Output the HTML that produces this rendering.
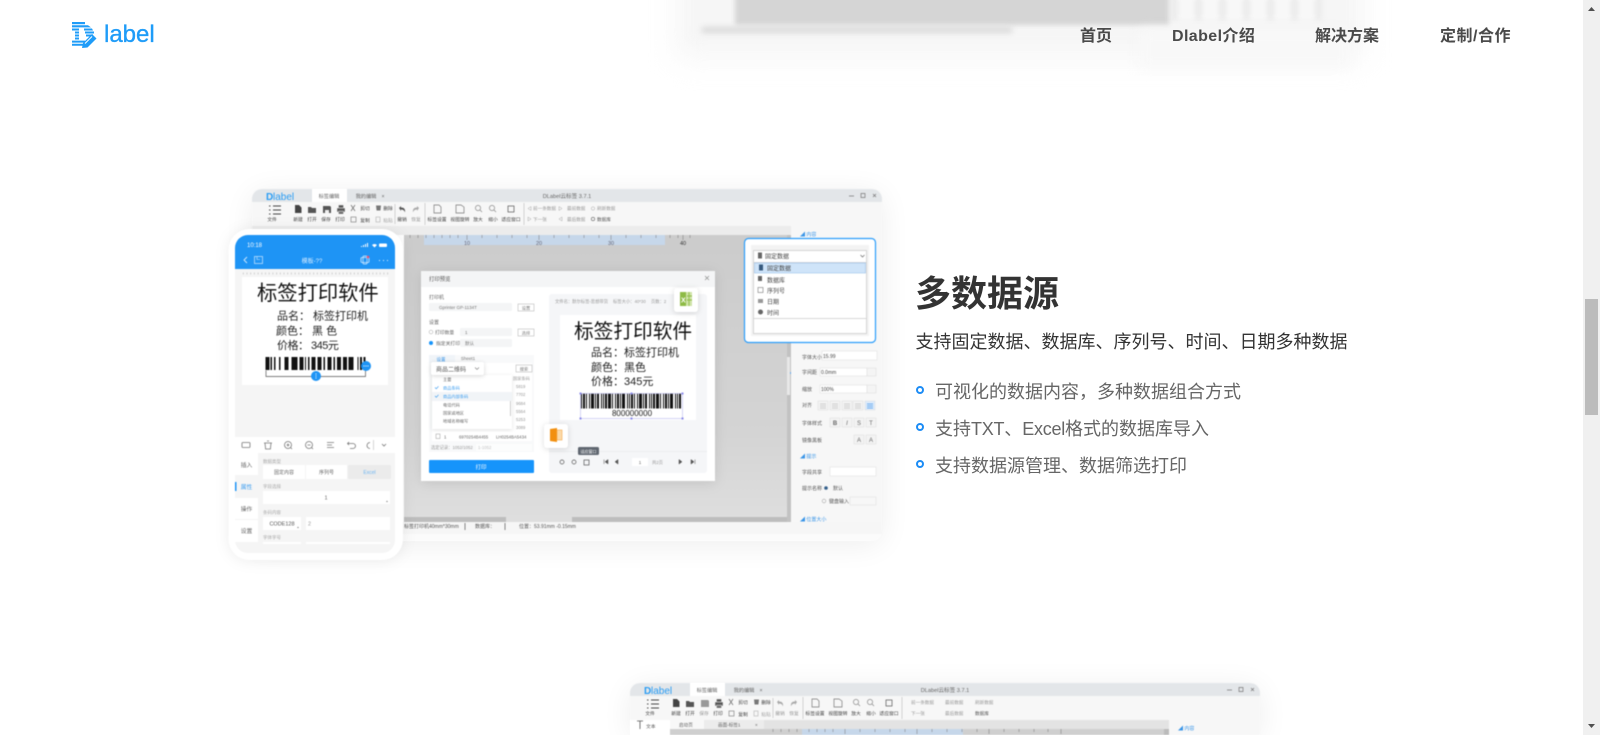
<!DOCTYPE html>
<html lang="zh"><head><meta charset="utf-8"><title>Dlabel</title>
<style>
html,body{margin:0;padding:0;width:1600px;height:735px;overflow:hidden;background:#fff}
body{position:relative;font-family:"Liberation Sans","Noto Sans CJK SC",sans-serif}
.a{position:absolute}
.nav{position:absolute;top:26px;font-size:16px;line-height:22px;font-weight:700;color:#4a4a4a;white-space:nowrap}
svg text{font-family:"Liberation Sans","Noto Sans CJK SC",sans-serif}
h1{position:absolute;left:915px;top:267px;margin:0;font-size:36px;line-height:54px;font-weight:700;color:#333}
.sub{position:absolute;left:915.500px;top:329px;font-size:18px;line-height:26px;color:#333;white-space:nowrap}
.li{position:absolute;left:935px;font-size:18px;line-height:26px;color:#666;white-space:nowrap}
.li span{letter-spacing:-.25px}
.dot{position:absolute;left:916px;width:4px;height:4px;border:2px solid #1c8cf5;border-radius:50%}
</style></head><body>

<!-- blurred bottom of previous image -->
<div class="a" style="left:0;top:0;width:1583px;height:110px;overflow:hidden">
<div class="a" style="left:675px;top:-40px;width:690px;height:100px;background:#f4f4f4;filter:blur(14px);opacity:.75"></div>
<div class="a" style="left:690px;top:-10px;width:660px;height:50px;background:#f6f6f6;filter:blur(3px)"></div>
<div class="a" style="left:735px;top:-10px;width:434px;height:35px;background:#d5d5d5;filter:blur(2.500px)"></div>
<div class="a" style="left:702px;top:27px;width:310px;height:6px;background:#d9d9d9;filter:blur(3px)"></div>
<div class="a" style="left:1172px;top:-4px;width:150px;height:24px;background:repeating-linear-gradient(90deg,#e6e6e6 0 5px,#f8f8f8 5px 24px);filter:blur(3px)"></div>
<div class="a" style="left:1140px;top:30px;width:210px;height:38px;background:#f8f8f8;filter:blur(6px)"></div>
</div>

<!-- logo -->
<svg class="a" style="left:72px;top:22px" width="26" height="26" viewBox="0 0 26 26">
<g fill="#1f9cf8"><rect x="0" y="0" width="13" height="2.200"/><path d="M0 3.200h16l3 2.200H0z"/><path d="M0 6.500h3v2H0zM4 6.500h3v2H4zM12 6.500h8l1 2h-9z"/><path d="M3 9.500h4v2H3zM13 9.500h9v2h-9zM3 12.500h4v2H3zM14 12.500h7v2h-7zM3 15.500h4v2H3zM0 6.500h7v2H0z"/><path d="M0 18.600h13v2H0zM0 21.700h11v2H0z"/><path d="M11 21l9-9 4.500 4.500-9 9L10 26z"/></g><path d="M13 21.500l7-7" stroke="#fff" stroke-width="1"/></svg>
<div class="a" style="left:104px;top:20px;font-size:24px;line-height:30px;color:#1f9cf8;-webkit-text-stroke:.35px #1f9cf8;font-family:'Liberation Sans',sans-serif">label</div>

<div class="nav" style="left:1080px">首页</div>
<div class="nav" style="left:1172px;letter-spacing:.4px">Dlabel介绍</div>
<div class="nav" style="left:1315px">解决方案</div>
<div class="nav" style="left:1440px;letter-spacing:.5px">定制/合作</div>

<!-- window shadows -->
<div class="a" style="left:252px;top:189px;width:630px;height:352px;border-radius:12px;box-shadow:0 4px 30px rgba(0,0,0,.07)"></div>
<div class="a" style="left:630px;top:683px;width:630px;height:52px;border-radius:12px 12px 0 0;box-shadow:0 4px 30px rgba(0,0,0,.07)"></div>

<svg class="a" style="left:0;top:0;filter:blur(.45px)" width="1583" height="735" viewBox="0 0 1583 735">
<defs>
<linearGradient id="cv" x1="0" y1="0" x2="0" y2="1"><stop offset="0" stop-color="#cccccc"/><stop offset=".7" stop-color="#d4d4d4"/><stop offset="1" stop-color="#dedede"/></linearGradient>
</defs>

<!-- ========== WINDOW 1 ========== -->
<g transform="translate(252 189)">
<rect width="630" height="352" rx="10" fill="#fff"/>
<path d="M0 13V10a10 10 0 0 1 10-10h610a10 10 0 0 1 10 10v3z" fill="#e3e6e9"/>
<rect y="13" width="630" height="24" fill="#f7f7f7"/>
<rect y="37" width="630" height="9" fill="#ececec"/>
<text x="14" y="11" font-size="10" font-weight="700" fill="#2a9df4">D</text><text x="21" y="11" font-size="10" fill="#2a9df4">label</text>
<path d="M60 0h35v13H60z" fill="#fff"/>
<g font-size="5.200" fill="#666" text-anchor="middle">
<text x="77" y="9">标签编辑</text><text x="114" y="9">我的编辑</text><text x="131" y="9">×</text><text x="315" y="9" font-size="5.600">DLabel云标签 3.7.1</text>
</g>
<path d="M597 7h5M609 4.500h4v4h-4zM621 5l3 3m0-3l-3 3" stroke="#777" stroke-width=".7" fill="none"/>
<!-- toolbar icons -->
<path d="M17 17h1.500M17 21h1.500M17 25h1.500M21 17h8M21 21h8M21 25h8" stroke="#444" stroke-width="1"/>
<path d="M43 16h4l2.500 2.500V24H43z" fill="#444"/><path d="M56 18h3l1 1h4v5h-8z" fill="#555"/><path d="M71 17h7l1 1v6h-8z" fill="#555"/><rect x="73" y="21" width="4" height="3" fill="#eee"/><path d="M85 19h8v4h-8zM86.500 16h5v3h-5zM86.500 22h5v3h-5z" fill="#555" stroke="#f7f7f7" stroke-width=".4"/>
<path d="M99 16l4 6m0-6l-4 6" stroke="#777" stroke-width=".8"/><rect x="99" y="28" width="5" height="5" fill="none" stroke="#888" stroke-width=".7"/>
<path d="M124 16.500h5l-.6 5h-3.800z" fill="#777"/><rect x="124" y="28" width="4" height="5" fill="none" stroke="#bbb" stroke-width=".7"/>
<path d="M147 19l2-2v1.500c3 0 4.500 1.500 4 5-.5-2-2-3-4-3V22z" fill="#555"/><path d="M167 19l-2-2v1.500c-3 0-4.500 1.500-4 5 .5-2 2-3 4-3V22z" fill="#aaa"/>
<path d="M182 16h5l2 2v6h-7z M204 16h5l3 2v6h-8z" fill="none" stroke="#777" stroke-width=".7"/>
<g fill="none" stroke="#888" stroke-width=".7"><circle cx="226" cy="19" r="2.600"/><path d="M228 21l2 2"/><circle cx="240" cy="19" r="2.600"/><path d="M242 21l2 2"/><rect x="256" y="17" width="6" height="6" stroke="#555"/></g>
<path d="M143 15v20M173 14v22M272 14v22" stroke="#c8c8c8" stroke-width=".8"/>
<g font-size="4.800" fill="#444" text-anchor="middle">
<text x="20" y="32">文件</text><text x="46" y="32">新建</text><text x="60" y="32">打开</text><text x="74" y="32">保存</text><text x="88" y="32">打印</text>
<text x="113" y="21">剪切</text><text x="113" y="33">复制</text><text x="136" y="21">删除</text><text x="136" y="33" fill="#aaa">粘贴</text>
<text x="150" y="32">撤销</text><text x="164" y="32" fill="#999">恢复</text>
<text x="185" y="32">标签设置</text><text x="208" y="32">视图旋转</text><text x="226" y="32">放大</text><text x="241" y="32">缩小</text><text x="259" y="32">适应窗口</text>
</g>
<g font-size="4.600" fill="#999">
<text x="281" y="21">前一条数据</text><text x="315" y="21">最前数据</text><text x="345" y="21">刷新数据</text>
<text x="281" y="32">下一张</text><text x="315" y="32">最后数据</text><text x="345" y="32" fill="#555">数据库</text>
</g>
<path d="M279 17.500l-3 2 3 2zM307 17.500l3 2-3 2zM276 28l3 2-3 2zM310 28l-3 2 3 2z" fill="none" stroke="#aaa" stroke-width=".5"/><circle cx="341" cy="19.500" r="1.700" fill="none" stroke="#aaa" stroke-width=".5"/><circle cx="341" cy="30" r="1.700" fill="none" stroke="#666" stroke-width=".6"/>
<!-- canvas -->
<rect x="152" y="46" width="387" height="282" fill="url(#cv)"/>
<rect x="172" y="46" width="241" height="10" fill="#c6d7ea"/>
<path d="M158 46v3M166 46v3M174 46v3M182 46v3M190 46v3M198 46v3M206 46v3M215 46v5M230 46v3M245 46v3M260 46v3M275 46v3M287 46v5M302 46v3M317 46v3M332 46v3M347 46v3M359 46v5M374 46v3M389 46v3M404 46v3M418 46v3M431 46v5M426 46v3M438 46v3" stroke="#777" stroke-width=".5"/>
<g font-size="5.500" fill="#667" text-anchor="middle"><text x="215" y="56">10</text><text x="287" y="56">20</text><text x="359" y="56">30</text><text x="431" y="56" fill="#333">40</text></g>
<!-- scrollbars -->
<rect x="152" y="328" width="387" height="5" fill="#bdbdbd"/><rect x="254" y="328" width="66" height="5" fill="#dedede"/>
<rect x="535" y="46" width="4" height="287" fill="#c2c2c2"/><rect x="535" y="168" width="3" height="38" fill="#e8e8e8"/><circle cx="539" cy="184" r="1" fill="#4a9bec"/>
<!-- status -->
<path d="M0 333h630v9a10 10 0 0 1-10 10H10a10 10 0 0 1-10-10z" fill="#fbfbfb"/><rect y="333" width="630" height="12" fill="#f6f6f6"/>
<g font-size="5" fill="#555"><text x="152" y="339">标签打印机40mm*30mm</text><text x="223" y="339">数据库：</text><text x="267" y="339">位置：53.91mm -0.15mm</text></g>
<path d="M213 334v7M253 334v7" stroke="#555" stroke-width=".7"/>
<!-- right panel -->
<rect x="539" y="37" width="91" height="296" fill="#f7f7f7"/>
<g font-size="5" fill="#555">
<text x="550" y="170">字体大小</text><text x="550" y="185">字间距</text><text x="550" y="202">缩放</text><text x="550" y="218">对齐</text><text x="550" y="236">字体样式</text><text x="550" y="253">镜像黑板</text><text x="550" y="285">字段共享</text><text x="550" y="301">提示名称</text><text x="581" y="301">默认</text><text x="577" y="314">键盘输入</text>
<text x="548" y="47" fill="#3b96e8">◢ 内容</text><text x="548" y="269" fill="#3b96e8">◢ 提示</text><text x="548" y="332" fill="#3b96e8">◢ 位置大小</text>
</g>
<g fill="#fff" stroke="#ddd" stroke-width=".5">
<rect x="570" y="162" width="55" height="9"/><rect x="568" y="179" width="47" height="8"/><rect x="615" y="179" width="9" height="8" fill="#f4f4f4"/><rect x="568" y="196" width="47" height="8"/><rect x="615" y="196" width="9" height="8" fill="#f4f4f4"/>
<rect x="578" y="278" width="46" height="9"/><rect x="598" y="308" width="26" height="8" fill="#f7f7f7"/>
</g>
<g font-size="5" fill="#444"><text x="571" y="169">15.99</text><text x="569" y="185">0.0mm</text><text x="569" y="202">100%</text></g>
<g fill="#f3f3f3" stroke="#ddd" stroke-width=".5">
<rect x="566" y="212" width="10" height="9"/><rect x="578" y="212" width="10" height="9"/><rect x="590" y="212" width="10" height="9"/><rect x="601" y="212" width="10" height="9"/><rect x="613" y="212" width="10" height="9" fill="#dcebfb"/>
<rect x="578" y="229" width="10" height="9"/><rect x="590" y="229" width="10" height="9"/><rect x="602" y="229" width="10" height="9"/><rect x="614" y="229" width="10" height="9"/>
<rect x="602" y="246" width="10" height="9"/><rect x="614" y="246" width="10" height="9"/>
</g>
<path d="M568 215h6M568 217h6M568 219h6M580 215h6M580 217h6M580 219h6M592 215h6M592 217h6M592 219h6M603 215h6M603 217h6M603 219h6" stroke="#aaa" stroke-width=".5"/><path d="M615 215h6M615 217h6M615 219h6" stroke="#4a9bec" stroke-width=".7"/>
<g font-size="6" fill="#666" text-anchor="middle"><text x="583" y="236" font-weight="700">B</text><text x="595" y="236" font-style="italic">I</text><text x="607" y="236">S</text><text x="619" y="236">T</text><text x="607" y="253">A</text><text x="619" y="253">A</text></g>
<circle cx="574" cy="299" r="1.800" fill="#34608c"/><circle cx="572" cy="312" r="1.800" fill="none" stroke="#aaa" stroke-width=".6"/>
<!-- dialog -->
<rect x="169" y="82" width="294" height="210" fill="#fff" style="filter:drop-shadow(0 2px 6px rgba(0,0,0,.1))"/>
<rect x="169" y="82" width="294" height="16" fill="#f4f5f6"/>
<text x="177" y="92" font-size="5.400" fill="#555">打印预览</text><path d="M453 87l4 4m0-4l-4 4" stroke="#888" stroke-width=".6"/>
<g font-size="4.800" fill="#666"><text x="177" y="110" font-size="5">打印机</text><text x="177" y="135" font-size="5">设置</text><text x="183" y="145">打印数量</text><text x="184" y="156">指定关打印</text></g>
<g fill="#f4f5f6"><rect x="177" y="114" width="83" height="8" rx="1"/><rect x="208" y="139" width="52" height="8" rx="1"/><rect x="208" y="150" width="52" height="8" rx="1"/></g>
<g font-size="4.500" fill="#777"><text x="187" y="120">Gprinter GP-1134T</text><text x="213" y="145">1</text><text x="213" y="156">默认</text></g>
<g fill="#fff" stroke="#bbb" stroke-width=".6"><rect x="266" y="115" width="16" height="7"/><rect x="266" y="140" width="16" height="7"/></g>
<g font-size="4.200" fill="#777" text-anchor="middle"><text x="274" y="120.500">设置</text><text x="274" y="145.500">选择</text></g>
<circle cx="179" cy="143" r="1.900" fill="none" stroke="#aaa" stroke-width=".5"/><circle cx="179" cy="154" r="2" fill="#1694fb"/>
<!-- table -->
<rect x="177" y="166" width="105" height="97" fill="#f8f9fa"/><rect x="177" y="166" width="26" height="8" fill="#f0f4f8"/>
<text x="189" y="172" font-size="4.500" fill="#3b96e8" text-anchor="middle">设置</text><text x="216" y="171" font-size="4.500" fill="#777" text-anchor="middle">Sheet1</text>
<rect x="180" y="174" width="100" height="69" fill="#fff"/>
<rect x="264" y="176" width="16" height="7" fill="#fff" stroke="#bbb" stroke-width=".6"/><text x="272" y="181.500" font-size="4.200" fill="#777" text-anchor="middle">搜索</text>
<g font-size="4.200" fill="#999"><text x="261" y="191">国家条码</text><text x="264" y="199">5819</text><text x="264" y="207">7702</text><text x="264" y="216">9684</text><text x="264" y="224">5564</text><text x="264" y="232">5253</text><text x="264" y="240">3089</text></g>
<rect x="180" y="186" width="80" height="54" fill="#fff" style="filter:drop-shadow(0 1px 2px rgba(0,0,0,.12))"/>
<rect x="180" y="203" width="80" height="9" fill="#f1f4f7"/><rect x="258" y="212" width="1" height="15" fill="#ccc"/>
<g font-size="4.200" fill="#666"><text x="191" y="192">主要</text><text x="191" y="200.500" fill="#3b9df0">商品条码</text><text x="191" y="209" fill="#3b9df0">商品内部条码</text><text x="191" y="217.500">电话代码</text><text x="191" y="225.500">国家或地区</text><text x="191" y="233.500">地域名称缩写</text></g>
<path d="M183 198.500l1.300 1.300 2.200-2.500M183 207l1.300 1.300 2.200-2.500" fill="none" stroke="#3b9df0" stroke-width=".7"/>
<rect x="179" y="173" width="53" height="13" rx="2" fill="#fff" style="filter:drop-shadow(0 1px 2px rgba(0,0,0,.16))"/>
<text x="184" y="182.500" font-size="6" fill="#555">商品二维码</text><path d="M223 178.500l2 2 2-2" fill="none" stroke="#777" stroke-width=".6"/>
<rect x="180" y="243" width="100" height="9" fill="#fff"/>
<g font-size="4.300" fill="#666"><rect x="184" y="245" width="4" height="4.500" fill="none" stroke="#999" stroke-width=".5"/><text x="192" y="249.500">1</text><text x="207" y="249.500">6970254B4455</text><text x="244" y="249.500">LH0254BA5434</text><text x="179" y="260" fill="#999">选定记录：1052/1052</text><text x="226" y="260">1-1052</text></g>
<rect x="224" y="255" width="56" height="7" fill="#fff" opacity=".6"/>
<rect x="177" y="271" width="105" height="13" rx="1" fill="#1694fb"/><text x="229" y="280" font-size="5.500" fill="#fff" text-anchor="middle">打印</text>
<!-- preview -->
<rect x="297" y="105" width="158" height="179" rx="3" fill="#f5f6f8"/>
<g font-size="4.300" fill="#999"><text x="303" y="114">文件名：默尔标签-思想带货</text><text x="361" y="114">标签大小：40*30</text><text x="399" y="114">页数：2</text></g>
<rect x="308" y="126" width="136" height="105" fill="#fff"/>
<text x="322" y="149" font-size="19.700" fill="#111">标签打印软件</text>
<g font-size="11" fill="#222"><text x="339" y="167">品名：标签打印机</text><text x="339" y="182">颜色：黑色</text><text x="339" y="196">价格：345元</text></g>
<path d="M329 212h100" stroke="#111" stroke-width="15" stroke-dasharray="1 1 2 1 1 2 1 1 3 1 1 1 2 2 1 1 1 1 2 1 3 1 1 2 1 1 2 1 1 1 3 2 1 1"/>
<rect x="328.500" y="204.500" width="102" height="25" fill="none" stroke="#b9b9ee" stroke-width=".6"/>
<g fill="#8a8ae8"><rect x="327.500" y="203.500" width="2" height="2"/><rect x="378.500" y="203.500" width="2" height="2"/><rect x="429.500" y="203.500" width="2" height="2"/><rect x="327.500" y="228.500" width="2" height="2"/><rect x="378.500" y="228.500" width="2" height="2"/><rect x="429.500" y="228.500" width="2" height="2"/></g>
<text x="380" y="227" font-size="8" fill="#222" text-anchor="middle">800000000</text>
<rect x="297" y="262" width="158" height="1" fill="#eceef0"/>
<rect x="326" y="258" width="21" height="8" rx="1.500" fill="#5f6670"/><text x="336.500" y="263.800" font-size="4" fill="#fff" text-anchor="middle">适应窗口</text>
<g fill="none" stroke="#555" stroke-width=".7"><circle cx="310" cy="273" r="2"/><circle cx="322" cy="273" r="2"/><rect x="332" y="271" width="5" height="5"/></g>
<path d="M352 270.500v4.500M353 272.800l3-2.300v4.500zM366 270.500l-3 2.300 3 2.300zM427 270.500l3 2.300-3 2.300zM439 270.500l3 2.300-3 2.300zM443 270.500v4.500" fill="#555" stroke="#555" stroke-width=".5"/>
<rect x="380" y="269" width="16" height="8" fill="#fff"/><text x="388" y="275" font-size="4.500" fill="#666" text-anchor="middle">1</text><text x="400" y="275" font-size="4.300" fill="#999">共2页</text>
<!-- tiles -->
<rect x="422" y="99" width="24" height="24" rx="3" fill="#fff" style="filter:drop-shadow(0 1px 3px rgba(0,0,0,.14))"/>
<rect x="428" y="103" width="12" height="14" fill="#cfe3a8"/><rect x="428" y="103" width="6" height="14" fill="#8ebb46"/><path d="M435 107h5M435 111h5M437 103v14" stroke="#8ebb46" stroke-width=".9"/><text x="429" y="113.500" font-size="7" font-weight="700" fill="#fff">X</text>
<rect x="292" y="235" width="24" height="24" rx="3" fill="#fff" style="filter:drop-shadow(0 1px 3px rgba(0,0,0,.14))"/>
<path d="M298 240l7-1v14l-7-1z" fill="#f28f0f"/><rect x="305" y="241" width="5" height="10" fill="#fbd9a8" stroke="#f5a94a" stroke-width=".6"/>
<!-- blue popup -->
<rect x="492.500" y="49.500" width="131" height="104" rx="4" fill="#fff" stroke="#2a9dfb" stroke-width="1.200"/>
<rect x="499" y="56" width="118" height="91" fill="#f3f3f3"/>
<rect x="501.500" y="61.500" width="113" height="83" fill="#fff" stroke="#ccc" stroke-width=".8"/>
<path d="M501.500 73.500h113M501.500 129.500h113" stroke="#ccc" stroke-width=".8"/>
<rect x="502.500" y="74" width="111" height="10" fill="#cfe4f9" stroke="#8db9e6" stroke-width=".5"/>
<path d="M609 66l2 2 2-2" fill="none" stroke="#666" stroke-width=".7" transform="translate(-.5 0)"/>
<g font-size="6" fill="#444"><text x="513" y="69.500">固定数据</text><text x="515" y="81.500">固定数据</text><text x="515" y="93.500">数据库</text><text x="515" y="104">序列号</text><text x="515" y="115">日期</text><text x="515" y="126">时间</text></g>
<g fill="#666"><rect x="506" y="63.500" width="4" height="6"/><rect x="507" y="75.500" width="4" height="6" fill="#36597e"/><rect x="506" y="87" width="4" height="5"/><rect x="506" y="98.500" width="5" height="5" fill="none" stroke="#777" stroke-width=".6"/><rect x="506" y="110" width="5" height="4" fill="#999"/><circle cx="508.500" cy="123" r="2.500"/></g>
</g>

<!-- ========== PHONE ========== -->
<rect x="228.500" y="229" width="174.500" height="331" rx="21" fill="#fff" style="filter:drop-shadow(0 1px 7px rgba(0,0,0,.07))"/>
<rect x="235" y="235" width="160" height="318" rx="13" fill="#f5f5f5"/>
<path d="M235 269v-21a13 13 0 0 1 13-13h134a13 13 0 0 1 13 13v21z" fill="#1e94f5"/>
<text x="247" y="247" font-size="6" fill="#fff">10:18</text>
<path d="M361 246h1v1h-1zM363 245h1v2h-1zM365 244h1v3h-1zM367 243h1v4h-1z" fill="#fff"/><path d="M372 245q2.500-2 5 0l-2.500 2.500z" fill="#fff"/><rect x="379" y="243.500" width="8" height="3.500" rx="1" fill="#fff"/>
<path d="M247 257l-3 3 3 3" fill="none" stroke="#cfe8ff" stroke-width=".9"/><rect x="254.500" y="256.500" width="8" height="7" fill="none" stroke="#cfe8ff" stroke-width=".7"/><path d="M257 256.500v3h3" fill="none" stroke="#cfe8ff" stroke-width=".6"/>
<text x="312" y="263" font-size="6" fill="#d5ebff" text-anchor="middle">模板-??</text>
<rect x="361" y="257.500" width="8" height="5" rx="1" fill="none" stroke="#d5ebff" stroke-width=".8"/><rect x="363" y="256" width="4" height="8" rx="1" fill="none" stroke="#d5ebff" stroke-width=".7"/><circle cx="368" cy="257" r="1.300" fill="#f0506e"/>
<path d="M379 260.500h1M383 260.500h1M387 260.500h1" stroke="#e2f1ff" stroke-width="1"/>
<rect x="235" y="269" width="160" height="8" fill="#f5f5f5"/><path d="M243 273.500H390" stroke="#bbb" stroke-width="2" stroke-dasharray=".6 3.100"/>
<rect x="242" y="277" width="146" height="108" fill="#fff"/>
<text x="257" y="300" font-size="20.300" fill="#111">标签打印软件</text>
<g font-size="11" fill="#222"><text x="277" y="319.500">品名： 标签打印机</text><text x="276" y="334.500">颜色： 黑 色</text><text x="277" y="349" letter-spacing="-.5">价格： 345元</text></g>
<path d="M265.500 363.500h100" stroke="#111" stroke-width="13" stroke-dasharray="4 1 1.500 2 1.500 3.500 1.500 4 4 3 6 2 4 1.500 1 2 1.500 2 4 2 4 2 1.500 2.500 4 2 1.500 2 4 2 4 1.500 5"/>
<path d="M266 370.500v6h99.500v-6" fill="none" stroke="#555" stroke-width=".7"/>
<circle cx="366" cy="366" r="5" fill="#1e94f5"/><path d="M363.500 366h5" stroke="#fff" stroke-width=".9" stroke-dasharray="1 1"/><circle cx="316" cy="376" r="5" fill="#1e94f5"/><path d="M316 373.500v5" stroke="#fff" stroke-width=".9" stroke-dasharray="1 1"/>
<rect x="235" y="437" width="160" height="16" fill="#fff"/>
<g fill="none" stroke="#777" stroke-width=".8"><rect x="242" y="442.500" width="8" height="5" rx=".8"/><path d="M265 443h6l-.6 6h-4.800zM264 443h8M267 441h2"/><circle cx="288" cy="445" r="3.500"/><path d="M286.500 445h3M288 443.500v3M290.500 447.500l1.500 1.500"/><circle cx="309" cy="445" r="3.500"/><path d="M307.500 445h3M311.500 447.500l1.500 1.500"/><path d="M327 442.500h7M327 445h5M327 447.500h7M349 442l-1.500 1.500 1.500 1.500M347.500 443.500h5.500a2.500 2.500 0 0 1 0 5h-3"/><path d="M372 442.500a3 3 0 1 0 0 6M384 444l2 2 2-2" transform="translate(-2 0)"/></g><path d="M373.500 440v10" stroke="#bbb" stroke-width=".6"/>
<!-- tabs -->
<path d="M235 453h23v22h-23zM235 498h23v21h-23zM235 520h23v22h-23z" fill="#fff"/><rect x="235" y="482" width="1.500" height="9" fill="#1e94f5"/>
<g font-size="5.800" fill="#666" text-anchor="middle"><text x="246.500" y="467">插入</text><text x="246.500" y="489" fill="#3b9df0">属性</text><text x="246.500" y="511">操作</text><text x="246.500" y="533">设置</text></g>
<g font-size="4.500" fill="#aaa"><text x="263" y="463">数据类型</text><text x="263" y="488">字段选择</text><text x="263" y="514">条码内容</text><text x="263" y="539">字体字号</text></g>
<path d="M263 465h42v14h-42zM306 465h41v14h-41zM263 491h127v13H263zM263 517h38v13h-38zM306 517h84v13h-84zM263 542h38v2h-38zM306 542h84v2h-84z" fill="#fff"/><rect x="348" y="465" width="43" height="14" rx="1" fill="#ebebeb"/>
<g font-size="5" text-anchor="middle" fill="#666"><text x="284" y="474">固定内容</text><text x="326.500" y="474">序列号</text><text x="369.500" y="474" fill="#6db5f2">Excel</text><text x="326" y="499.500" font-size="5.500">1</text><text x="282" y="525.500" font-size="5.500" fill="#555">CODE128</text></g>
<text x="308" y="525.500" font-size="5.500" fill="#999">2</text>
<path d="M388 502h-2l1 -1.500zM299 528h-2l1-1.500z" fill="#888"/>
<!-- ========== WINDOW 2 ========== -->
<g transform="translate(630 683)">
<path d="M0 52V10a10 10 0 0 1 10-10h610a10 10 0 0 1 10 10v42z" fill="#fff"/>
<path d="M0 13V10a10 10 0 0 1 10-10h610a10 10 0 0 1 10 10v3z" fill="#e3e6e9"/>
<rect y="13" width="630" height="24" fill="#f7f7f7"/>
<text x="14" y="11" font-size="10" font-weight="700" fill="#2a9df4">D</text><text x="21" y="11" font-size="10" fill="#2a9df4">label</text>
<path d="M60 0h35v13H60z" fill="#fff"/>
<g font-size="5.200" fill="#666" text-anchor="middle">
<text x="77" y="9">标签编辑</text><text x="114" y="9">我的编辑</text><text x="131" y="9">×</text><text x="315" y="9" font-size="5.600">DLabel云标签 3.7.1</text>
</g>
<path d="M597 7h5M609 4.500h4v4h-4zM621 5l3 3m0-3l-3 3" stroke="#777" stroke-width=".7" fill="none"/>
<path d="M17 17h1.500M17 21h1.500M17 25h1.500M21 17h8M21 21h8M21 25h8" stroke="#444" stroke-width="1"/>
<path d="M43 16h4l2.500 2.500V24H43z" fill="#444"/><path d="M56 18h3l1 1h4v5h-8z" fill="#555"/><path d="M71 17h7l1 1v6h-8z" fill="#999"/><path d="M85 19h8v4h-8zM86.500 16h5v3h-5zM86.500 22h5v3h-5z" fill="#555" stroke="#f7f7f7" stroke-width=".4"/>
<path d="M99 16l4 6m0-6l-4 6" stroke="#777" stroke-width=".8"/><rect x="99" y="28" width="5" height="5" fill="none" stroke="#888" stroke-width=".7"/>
<path d="M124 16.500h5l-.6 5h-3.800z" fill="#777"/><rect x="124" y="28" width="4" height="5" fill="none" stroke="#bbb" stroke-width=".7"/>
<path d="M147 19l2-2v1.500c3 0 4.500 1.500 4 5-.5-2-2-3-4-3V22z" fill="#aaa"/><path d="M167 19l-2-2v1.500c-3 0-4.500 1.500-4 5 .5-2 2-3 4-3V22z" fill="#aaa"/>
<path d="M182 16h5l2 2v6h-7z M204 16h5l3 2v6h-8z" fill="none" stroke="#777" stroke-width=".7"/>
<g fill="none" stroke="#888" stroke-width=".7"><circle cx="226" cy="19" r="2.600"/><path d="M228 21l2 2"/><circle cx="240" cy="19" r="2.600"/><path d="M242 21l2 2"/><rect x="256" y="17" width="6" height="6" stroke="#555"/></g>
<path d="M143 15v20M173 14v22M272 14v22" stroke="#c8c8c8" stroke-width=".8"/>
<g font-size="4.800" fill="#444" text-anchor="middle">
<text x="20" y="32">文件</text><text x="46" y="32">新建</text><text x="60" y="32">打开</text><text x="74" y="32" fill="#999">保存</text><text x="88" y="32">打印</text>
<text x="113" y="21">剪切</text><text x="113" y="33">复制</text><text x="136" y="21">删除</text><text x="136" y="33" fill="#aaa">粘贴</text>
<text x="150" y="32" fill="#999">撤销</text><text x="164" y="32" fill="#999">恢复</text>
<text x="185" y="32">标签设置</text><text x="208" y="32">视图旋转</text><text x="226" y="32">放大</text><text x="241" y="32">缩小</text><text x="259" y="32">适应窗口</text>
</g>
<g font-size="4.600" fill="#999">
<text x="281" y="21">前一条数据</text><text x="315" y="21">最前数据</text><text x="345" y="21">刷新数据</text>
<text x="281" y="32">下一张</text><text x="315" y="32">最后数据</text><text x="345" y="32" fill="#555">数据库</text>
</g>
<rect x="40" y="37" width="499" height="15" fill="#e3e3e3"/>
<rect x="40" y="37" width="34" height="9" fill="#f8f8f8"/><rect x="74" y="37" width="60" height="9" fill="#ececec"/>
<g font-size="4.600" fill="#666"><text x="49" y="43.500">启动页</text><text x="88" y="43.500">画面-标签1</text><text x="125" y="43.500">×</text></g>
<rect x="40" y="46" width="499" height="6" fill="#cfcfcf"/><rect x="172" y="46" width="161" height="6" fill="#c6d7ea"/>
<path d="M143 46v3M151 46v3M159 46v3M167 46v3M179 46v3M187 46v3M195 46v3M203 46v3M215 46v5M230 46v3M245 46v3M260 46v3M275 46v3M287 46v5M302 46v3M317 46v3M332 46v3M347 46v3M359 46v5M374 46v3M389 46v3M404 46v3M418 46v3M431 46v5" stroke="#777" stroke-width=".5"/>
<path d="M7 38h6M10 38v8" stroke="#555" stroke-width=".8"/><text x="16" y="45" font-size="4.800" fill="#555">文本</text>
<rect x="539" y="37" width="91" height="15" fill="#f7f7f7"/><rect x="534" y="46" width="5" height="6" fill="#bbb"/>
<text x="548" y="47" font-size="5" fill="#3b96e8">◢ 内容</text>
</g>
</svg>

<!-- text block -->
<h1>多数据源</h1>
<div class="sub">支持固定数据、数据库、序列号、时间、日期多种数据</div>
<div class="dot" style="top:386px"></div><div class="li" style="top:379px">可视化的数据内容，多种数据组合方式</div>
<div class="dot" style="top:423px"></div><div class="li" style="top:416px">支持<span>TXT</span>、<span>Excel</span>格式的数据库导入</div>
<div class="dot" style="top:460px"></div><div class="li" style="top:453px">支持数据源管理、数据筛选打印</div>

<!-- scrollbar -->
<div class="a" style="left:1583px;top:0;width:17px;height:735px;background:#f0f0f0"></div>
<div class="a" style="left:1585px;top:299px;width:13px;height:116px;background:#bcbcbc"></div>
<svg class="a" style="left:1583px;top:0" width="17" height="735"><path d="M5 11l3.500-4L12 11zM5 724l3.500 4 3.500-4z" fill="#505050"/></svg>
</body></html>
